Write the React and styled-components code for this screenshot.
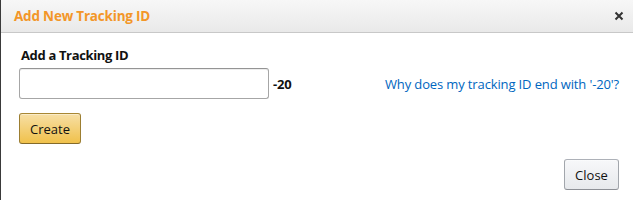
import React from "react";
import styled, { createGlobalStyle } from "styled-components";

const Global = createGlobalStyle`
  html, body { margin: 0; padding: 0; background: #fff; }
  body { font-family: "Open Sans", "Liberation Sans", Arial, sans-serif; color: #111; }
`;

const Dialog = styled.div`
  width: 633px;
  height: 200px;
  box-sizing: border-box;
  border-left: 1px solid #3a3a3a;
  display: flex;
  flex-direction: column;
  background: #fff;
`;

const Header = styled.div`
  height: 33px;
  box-sizing: border-box;
  background: linear-gradient(to bottom, #f7f7f7, #e9e9e9);
  border-bottom: 1px solid #c8c8c8;
  display: flex;
  align-items: center;
  justify-content: space-between;
  padding: 0 9px 1px 13px;
`;

const Title = styled.h4`
  margin: 0;
  font-size: 13.5px;
  font-weight: 700;
  color: #f39628;
  letter-spacing: -0.2px;
`;

const CloseX = styled.span`
  display: flex;
  width: 10px;
  height: 10px;
`;

const Body = styled.div`
  flex: 1;
  display: flex;
  flex-direction: column;
  padding: 13px 13px 0 18px;
`;

const Label = styled.label`
  font-size: 13px;
  font-weight: 700;
  color: #111;
  line-height: 19px;
  margin-left: 2px;
  letter-spacing: -0.35px;
`;

const Row = styled.div`
  display: flex;
  align-items: center;
  margin-top: 3px;
`;

const Input = styled.input`
  width: 250px;
  height: 31px;
  box-sizing: border-box;
  border: 1px solid #a6a6a6;
  border-top-color: #949494;
  border-radius: 3px;
  box-shadow: 0 1px 0 rgba(0,0,0,.07) inset;
  padding: 3px 7px;
  font-size: 13px;
  outline: none;
`;

const Suffix = styled.span`
  font-size: 13px;
  font-weight: 700;
  margin-left: 4px;
  color: #111;
  letter-spacing: -0.2px;
`;

const Link = styled.a`
  margin-left: auto;
  font-size: 13px;
  color: #0066c0;
  text-decoration: none;
  cursor: pointer;
  margin-right: 1px;
  letter-spacing: -0.13px;
`;

const Button = styled.button`
  height: 31px;
  box-sizing: border-box;
  border-radius: 3px;
  border: 1px solid;
  font-family: inherit;
  font-size: 13px;
  color: #111;
  padding: 0 10px;
  cursor: pointer;
  background: ${p => p.$primary
    ? "linear-gradient(to bottom, #f7dfa5, #f0c14b)"
    : "linear-gradient(to bottom, #f7f8fa, #e7e9ec)"};
  border-color: ${p => p.$primary
    ? "#a88734 #9c7e31 #846a29"
    : "#adb1b8 #a2a6ac #8d9096"};
  box-shadow: 0 1px 0 rgba(255,255,255,.4) inset;
`;

const CreateRow = styled.div`
  margin-top: 14px;
  display: flex;
`;

const Footer = styled.div`
  display: flex;
  justify-content: flex-end;
  margin-top: 15px;
  margin-right: 1px;
`;

export default function App() {
  return (
    <>
      <Global />
      <Dialog>
        <Header>
          <Title>Add New Tracking ID</Title>
          <CloseX>
            <svg width="10" height="10" viewBox="0 0 10 10">
              <path d="M1.5 1.5 L8.5 8.5 M8.5 1.5 L1.5 8.5" stroke="#333" strokeWidth="2" />
            </svg>
          </CloseX>
        </Header>
        <Body>
          <Label>Add a Tracking ID</Label>
          <Row>
            <Input type="text" />
            <Suffix>-20</Suffix>
            <Link>Why does my tracking ID end with '-20'?</Link>
          </Row>
          <CreateRow>
            <Button $primary>Create</Button>
          </CreateRow>
          <Footer>
            <Button style={{ width: 55 }}>Close</Button>
          </Footer>
        </Body>
      </Dialog>
    </>
  );
}
